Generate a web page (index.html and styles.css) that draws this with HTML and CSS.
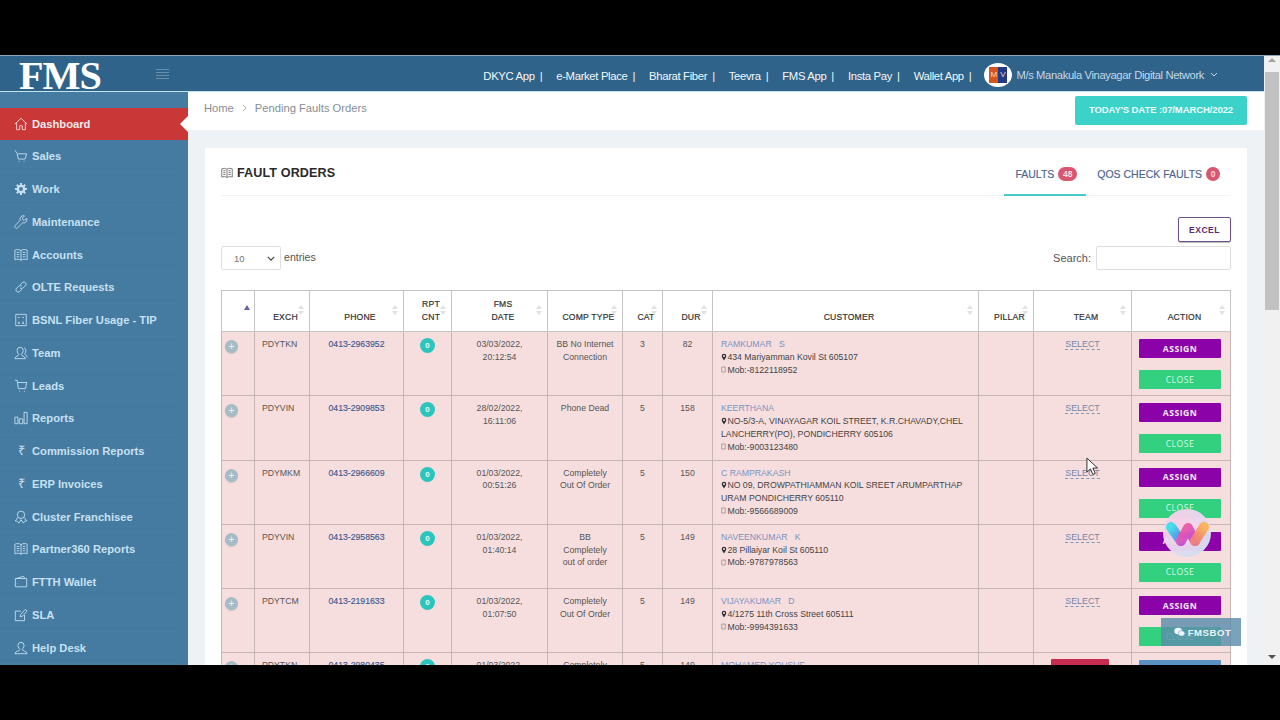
FILE: index.html
```html
<!DOCTYPE html>
<html lang="en">
<head>
<meta charset="utf-8">
<title>Pending Faults Orders</title>
<link rel="stylesheet" href="styles.css">
</head>
<body>
<svg class="defs" aria-hidden="true">
  <symbol id="i-home" viewBox="0 0 16 16"><path d="M1 8 8 1.5 15 8M3 6.5V14.5H6.5V10H9.5V14.5H13V6.5"/></symbol>
  <symbol id="i-basket" viewBox="0 0 16 16"><path d="M1 1.5 4 5.5H14.5L12.5 11.5H5L3.5 5.5M5.5 14h1M11 14h1"/></symbol>
  <symbol id="i-gear" viewBox="0 0 16 16"><circle class="gear-ring" cx="8" cy="8" r="3.6"/><path class="gear-teeth" d="M8 1.2V4M8 12V14.8M1.2 8H4M12 8H14.8M3.2 3.2 5 5M11 11 12.8 12.8M3.2 12.8 5 11M11 5 12.8 3.2"/></symbol>
  <symbol id="i-wrench" viewBox="0 0 16 16"><path d="M14.5 3.5 12 6 10 5.5 9.5 3.5 12 1A4 4 0 0 0 7 6.2L1.5 11.8A1.8 1.8 0 0 0 4.2 14.5L9.8 9A4 4 0 0 0 14.5 3.5Z"/></symbol>
  <symbol id="i-book" viewBox="0 0 16 16"><path d="M1 2.5C3 1.5 6 1.5 8 3 10 1.5 13 1.5 15 2.5V13.5C13 12.5 10 12.5 8 14 6 12.5 3 12.5 1 13.5ZM8 3V14M3 5h3M3 7.5h3M3 10h3M10 5h3M10 7.5h3M10 10h3"/></symbol>
  <symbol id="i-link" viewBox="0 0 16 16"><path d="M7 5.5 10 2.5A2.6 2.6 0 0 1 13.5 6L10.5 9A2.6 2.6 0 0 1 7 9M9 10.5 6 13.5A2.6 2.6 0 0 1 2.5 10L5.5 7A2.6 2.6 0 0 1 9 7"/></symbol>
  <symbol id="i-calc" viewBox="0 0 16 16"><path d="M2 1.5H14V14.5H2ZM4.5 5h2M9.5 5h2M4.5 10.5 6.5 12M6.5 10.5 4.5 12M9.5 10.5h2M9.5 12h2"/></symbol>
  <symbol id="i-team" viewBox="0 0 16 16"><path d="M7 1.5A3.5 3.5 0 0 1 10.5 5C10.5 8 8.5 9 8.5 10 8.5 11.5 13 11.5 13 14.5H1C1 11.5 5.5 11.5 5.5 10 5.5 9 3.5 8 3.5 5A3.5 3.5 0 0 1 7 1.5ZM11.5 2C14 3 14 7 12.5 8.5 12 10 15 10.5 15 13"/></symbol>
  <symbol id="i-cart" viewBox="0 0 16 16"><path d="M1 1.5H3.5L5 11H13L14.5 4H4M6 14h1M11.5 14h1"/></symbol>
  <symbol id="i-bars" viewBox="0 0 16 16"><path d="M1 7H4.5V14.5H1ZM6 9H10V14.5H6ZM11.5 1.5H15V14.5H11.5Z"/></symbol>
  <symbol id="i-award" viewBox="0 0 16 16"><circle cx="8" cy="5.5" r="4.2"/><path d="M4.5 8.5 1.5 12.5 4 13 5.5 15 8 11 10.5 15 12 13 14.5 12.5 11.5 8.5"/></symbol>
  <symbol id="i-wallet" viewBox="0 0 16 16"><path d="M2.5 4 11 1.5 12 4M1.5 4H14.5V13.5H1.5ZM3.5 9.5h.5"/></symbol>
  <symbol id="i-edit" viewBox="0 0 16 16"><path d="M12 8V14.5H1.5V3.5H8M7 10 7.5 7.5 13 1.5 15 3.5 9.5 9.5Z"/></symbol>
  <symbol id="i-user" viewBox="0 0 16 16"><path d="M8 1.5A3.5 3.5 0 0 1 11.5 5C11.5 8 9.5 8.5 9.5 10 9.5 11.5 15 11.5 15 14.5H1C1 11.5 6.5 11.5 6.5 10 6.5 8.5 4.5 8 4.5 5A3.5 3.5 0 0 1 8 1.5Z"/></symbol>
  <symbol id="i-pin" viewBox="0 0 10 12"><path class="solid" d="M5 .5A3.8 3.8 0 0 0 1.2 4.3C1.2 7 5 11.5 5 11.5S8.8 7 8.8 4.3A3.8 3.8 0 0 0 5 .5ZM5 2.6A1.7 1.7 0 1 1 5 6 1.7 1.7 0 0 1 5 2.6Z"/></symbol>
  <symbol id="i-mob" viewBox="0 0 10 12"><path d="M1.5 1H8.5V11H1.5Z"/></symbol>
</svg>
<div class="frame">
  <div class="page">
    <header class="topbar">
      <div class="brand"><span class="logo">FMS</span><span class="burger"><i></i><i></i><i></i><i></i></span></div>
      <nav class="toplinks">
        <a>DKYC App</a><a>e-Market Place</a><a>Bharat Fiber</a><a>Teevra</a><a>FMS App</a><a>Insta Pay</a><a>Wallet App</a>
      </nav>
      <div class="account">
        <span class="avatar"><b class="av-o">M</b><b class="av-b">V</b></span>
        <span class="acname">M/s Manakula Vinayagar Digital Network</span>
        <svg class="chev" viewBox="0 0 8 5"><path d="M1 1 4 4 7 1"/></svg>
      </div>
    </header>
    <div class="shell">
      <aside class="sidebar">
        <a class="item active"><svg class="ic"><use href="#i-home"/></svg>Dashboard</a>
        <a class="item"><svg class="ic"><use href="#i-basket"/></svg>Sales</a>
        <a class="item"><svg class="ic"><use href="#i-gear"/></svg>Work</a>
        <a class="item"><svg class="ic"><use href="#i-wrench"/></svg>Maintenance</a>
        <a class="item"><svg class="ic"><use href="#i-book"/></svg>Accounts</a>
        <a class="item"><svg class="ic"><use href="#i-link"/></svg>OLTE Requests</a>
        <a class="item"><svg class="ic"><use href="#i-calc"/></svg>BSNL Fiber Usage - TIP</a>
        <a class="item"><svg class="ic"><use href="#i-team"/></svg>Team</a>
        <a class="item"><svg class="ic"><use href="#i-cart"/></svg>Leads</a>
        <a class="item"><svg class="ic"><use href="#i-bars"/></svg>Reports</a>
        <a class="item"><span class="ic rupee">₹</span>Commission Reports</a>
        <a class="item"><span class="ic rupee">₹</span>ERP Invoices</a>
        <a class="item"><svg class="ic"><use href="#i-award"/></svg>Cluster Franchisee</a>
        <a class="item"><svg class="ic"><use href="#i-book"/></svg>Partner360 Reports</a>
        <a class="item"><svg class="ic"><use href="#i-wallet"/></svg>FTTH Wallet</a>
        <a class="item"><svg class="ic"><use href="#i-edit"/></svg>SLA</a>
        <a class="item"><svg class="ic"><use href="#i-user"/></svg>Help Desk</a>
      </aside>
      <main class="main">
        <div class="crumbs">
          <div class="trail"><span>Home</span><svg class="sep" viewBox="0 0 6 10"><path d="M1 1 5 5 1 9"/></svg><span>Pending Faults Orders</span></div>
          <div class="today">TODAY'S DATE :07/MARCH/2022</div>
        </div>
        <section class="card">
          <div class="cardhead">
            <h1 class="title"><svg class="ic-title"><use href="#i-book"/></svg>FAULT ORDERS</h1>
            <div class="tabs">
              <a class="tab on">FAULTS <span class="count wide">48</span></a>
              <a class="tab">QOS CHECK FAULTS <span class="count">0</span></a>
            </div>
          </div>
          <div class="tools"><button class="excel">EXCEL</button></div>
          <div class="filters">
            <div class="length"><span class="select">10<svg class="selchev" viewBox="0 0 10 6"><path d="M1 1 5 5 9 1"/></svg></span><span>entries</span></div>
            <div class="search"><label>Search:</label><span class="input"></span></div>
          </div>
          <table class="grid">
            <colgroup>
              <col class="c1"><col class="c2"><col class="c3"><col class="c4"><col class="c5"><col class="c6"><col class="c7"><col class="c8"><col class="c9"><col class="c10"><col class="c11"><col class="c12">
            </colgroup>
            <thead>
              <tr>
                <th class="first"><i class="asc"></i></th>
                <th>EXCH<i class="sort"></i></th>
                <th>PHONE<i class="sort"></i></th>
                <th>RPT<br>CNT<i class="sort"></i></th>
                <th>FMS<br>DATE<i class="sort"></i></th>
                <th>COMP TYPE<i class="sort"></i></th>
                <th>CAT<i class="sort"></i></th>
                <th>DUR<i class="sort"></i></th>
                <th>CUSTOMER<i class="sort"></i></th>
                <th>PILLAR<i class="sort"></i></th>
                <th>TEAM<i class="sort"></i></th>
                <th>ACTION<i class="sort"></i></th>
              </tr>
            </thead>
            <tbody>
              <tr>
                <td><span class="plus">+</span></td><td class="left">PDYTKN</td><td><a class="phone">0413-2963952</a></td><td><span class="zero">0</span></td><td>03/03/2022,<br>20:12:54</td><td>BB No Internet Connection</td><td>3</td><td>82</td>
                <td class="cust"><a class="cname">RAMKUMAR &nbsp; S</a><br><svg class="pin"><use href="#i-pin"/></svg> 434 Mariyamman Kovil St 605107<br><svg class="mob"><use href="#i-mob"/></svg> Mob:-8122118952</td>
                <td></td><td class="team"><a class="sel">SELECT</a></td><td class="act"><button class="assign">ASSIGN</button><button class="close">CLOSE</button></td>
              </tr>
              <tr>
                <td><span class="plus">+</span></td><td class="left">PDYVIN</td><td><a class="phone">0413-2909853</a></td><td><span class="zero">0</span></td><td>28/02/2022,<br>16:11:06</td><td>Phone Dead</td><td>5</td><td>158</td>
                <td class="cust"><a class="cname">KEERTHANA</a><br><svg class="pin"><use href="#i-pin"/></svg> NO-5/3-A, VINAYAGAR KOIL STREET, K.R.CHAVADY,CHEL<br>LANCHERRY(PO), PONDICHERRY 605106<br><svg class="mob"><use href="#i-mob"/></svg> Mob:-9003123480</td>
                <td></td><td class="team"><a class="sel">SELECT</a></td><td class="act"><button class="assign">ASSIGN</button><button class="close">CLOSE</button></td>
              </tr>
              <tr>
                <td><span class="plus">+</span></td><td class="left">PDYMKM</td><td><a class="phone">0413-2966609</a></td><td><span class="zero">0</span></td><td>01/03/2022,<br>00:51:26</td><td>Completely<br>Out Of Order</td><td>5</td><td>150</td>
                <td class="cust"><a class="cname">C RAMPRAKASH</a><br><svg class="pin"><use href="#i-pin"/></svg> NO 09, DROWPATHIAMMAN KOIL SREET ARUMPARTHAP<br>URAM PONDICHERRY 605110<br><svg class="mob"><use href="#i-mob"/></svg> Mob:-9566689009</td>
                <td></td><td class="team"><a class="sel">SELECT</a></td><td class="act"><button class="assign">ASSIGN</button><button class="close">CLOSE</button></td>
              </tr>
              <tr>
                <td><span class="plus">+</span></td><td class="left">PDYVIN</td><td><a class="phone">0413-2958563</a></td><td><span class="zero">0</span></td><td>01/03/2022,<br>01:40:14</td><td>BB<br>Completely<br>out of order</td><td>5</td><td>149</td>
                <td class="cust"><a class="cname">NAVEENKUMAR &nbsp; K</a><br><svg class="pin"><use href="#i-pin"/></svg> 28 Pillaiyar Koil St 605110<br><svg class="mob"><use href="#i-mob"/></svg> Mob:-9787978563</td>
                <td></td><td class="team"><a class="sel">SELECT</a></td><td class="act"><button class="assign">ASSIGN</button><button class="close">CLOSE</button></td>
              </tr>
              <tr>
                <td><span class="plus">+</span></td><td class="left">PDYTCM</td><td><a class="phone">0413-2191633</a></td><td><span class="zero">0</span></td><td>01/03/2022,<br>01:07:50</td><td>Completely<br>Out Of Order</td><td>5</td><td>149</td>
                <td class="cust"><a class="cname">VIJAYAKUMAR &nbsp; D</a><br><svg class="pin"><use href="#i-pin"/></svg> 4/1275 11th Cross Street 605111<br><svg class="mob"><use href="#i-mob"/></svg> Mob:-9994391633</td>
                <td></td><td class="team"><a class="sel">SELECT</a></td><td class="act"><button class="assign">ASSIGN</button><button class="close">CLOSE</button></td>
              </tr>
              <tr>
                <td><span class="plus">+</span></td><td class="left">PDYTKN</td><td><a class="phone">0413-2980435</a></td><td><span class="zero">0</span></td><td>01/03/2022,</td><td>Completely</td><td>5</td><td>149</td>
                <td class="cust"><a class="cname">MOHAMED YOUSUF</a></td>
                <td></td><td class="team"><button class="redbtn"></button></td><td class="act"><button class="bluebtn"></button></td>
              </tr>
            </tbody>
          </table>
        </section>
      </main>
    </div>
  </div>
  <div class="scrollbar">
    <span class="arrow up"></span>
    <span class="thumb"></span>
    <span class="arrow down"></span>
  </div>
  <svg class="cursor" viewBox="0 0 14 20"><path d="M1 1V16L4.8 12.6 7.4 18.6 10 17.4 7.4 11.8 12.4 11.6Z"/></svg>
  <div class="wbadge">
    <svg viewBox="0 0 48 48">
      <defs>
        <linearGradient id="w1" x1="0" y1="0" x2="1" y2="1"><stop offset="0" stop-color="#3fe0e8"/><stop offset="1" stop-color="#6a7df0"/></linearGradient>
        <linearGradient id="w2" x1="0" y1="0" x2="1" y2="1"><stop offset="0" stop-color="#ef5f9d"/><stop offset="1" stop-color="#c050e0"/></linearGradient>
        <linearGradient id="w3" x1="0" y1="1" x2="1" y2="0"><stop offset="0" stop-color="#f28080"/><stop offset="1" stop-color="#fbb45a"/></linearGradient>
      </defs>
      <path class="w-s" stroke="url(#w1)" d="M8 18 18 32"/>
      <path class="w-s" stroke="url(#w2)" d="M18 32 25 19 32 32"/>
      <path class="w-s" stroke="url(#w3)" d="M32 32 41 18"/>
    </svg>
  </div>
  <div class="bot"><svg class="botic" viewBox="0 0 16 14"><ellipse cx="6" cy="5.5" rx="5.6" ry="4.8"/><ellipse class="cut" cx="11" cy="9" rx="4.6" ry="3.9"/></svg>FMSBOT</div>
</div>
</body>
</html>
```
FILE: styles.css
```css
* { box-sizing: border-box; }
html, body { margin: 0; height: 100%; }
body { background: #000; padding: 55px 0; overflow: hidden; font-family: "Liberation Sans", Arial, sans-serif; color: #444; }
.defs { display: none; }
a { text-decoration: none; color: inherit; }

.frame { position: relative; display: flex; height: 610px; overflow: hidden; border-top: 1px solid #8aa5ba; }
.page { flex: 1; min-width: 0; display: flex; flex-direction: column; }

.topbar { flex: 0 0 36px; height: 36px; min-height: 0; display: flex; align-items: center; background: #2f6389; color: #fff; border-bottom: 1px solid #bfe4ee; }
.brand { width: 188px; height: 100%; display: flex; align-items: center; padding-left: 19px; }
.logo { display: block; height: 35px; font: bold 41px/35px "Liberation Serif", serif; color: #fff; letter-spacing: -1px; transform: translateY(2px) scaleX(.98); transform-origin: left center; width: 86px; }
.burger { margin-left: 51px; display: flex; flex-direction: column; gap: 2px; opacity: .45; }
.burger i { display: block; width: 13px; height: 1px; background: #a9c6da; }
.toplinks { margin-left: auto; display: flex; font-size: 11.3px; letter-spacing: -.34px; color: #f2f7fa; padding-top: 5px; }
.toplinks a { margin-right: 14px; }
.toplinks a::after { content: "|"; margin-left: 5px; }
.account { display: flex; align-items: center; margin-right: 46px; padding-top: 2px; }
.avatar { width: 28px; height: 24px; border-radius: 50%; background: #fff; margin-left: -1px; display: flex; align-items: center; justify-content: center; font-size: 8px; color: #f6d5c0; overflow: hidden; }
.avatar b { display: block; height: 16px; line-height: 16px; width: 9px; text-align: center; font-weight: normal; }
.av-o { background: #d4561f; }
.av-b { background: #223a86; }
.acname { margin-left: 4px; font-size: 11.2px; letter-spacing: -.36px; color: #c4d8e6; }
.chev { width: 8px; height: 5px; margin-left: 6px; fill: none; stroke: #c4d8e6; stroke-width: 1; }

.shell { flex: 1; min-height: 0; display: flex; }
.sidebar { flex: 0 0 188px; background: #457aa1; padding-top: 15.7px; overflow: hidden; }
.item { position: relative; display: flex; align-items: center; height: 32.75px; padding-left: 14px; font-size: 11.2px; font-weight: bold; color: #c6e1f3; border-bottom: 1px solid #487da4; margin-right: 12px; }
.item.active { background: #c93737; color: #f8e8e8; margin-right: 0; border-bottom: 0; }
.item.active::after { content: ""; position: absolute; right: 0; top: 50%; margin-top: -8px; border: 8px solid transparent; border-right-color: #fff; border-left-width: 0; }
.ic { width: 14px; height: 14px; margin-right: 4px; flex: none; fill: none; stroke: currentColor; stroke-width: 1; overflow: visible; }
.active .ic { stroke: #fbdede; }
.rupee { font-size: 13px; font-weight: normal; line-height: 14px; text-align: center; }
.gear-ring { stroke-width: 2.8; }
.gear-teeth { stroke-width: 2.2; }

.main { flex: 1; min-width: 0; background: #eef2f5; overflow: hidden; }
.crumbs { height: 38px; background: #fff; padding-left: 16px; padding-right: 17px; display: flex; justify-content: space-between; align-items: flex-start; }
.trail { display: flex; align-items: center; height: 31px; font-size: 11.2px; color: #868e96; }
.sep { width: 5px; height: 8px; margin: 0 8px; fill: none; stroke: #99a; stroke-width: 1; }
.today { margin-top: 4px; width: 172px; height: 29px; line-height: 28px; text-align: center; background: #3ad2c9; color: #eefcfb; font-size: 9.5px; font-weight: bold; letter-spacing: -.1px; border-radius: 2px; }

.card { margin: 18px 17px 0; padding: 0 16px; background: #fff; height: 600px; }
.cardhead { display: flex; justify-content: space-between; height: 48px; border-bottom: 1px solid #f1f2f4; }
.title { margin: 0; padding-top: 18px; font-size: 12.6px; line-height: 15px; font-weight: bold; letter-spacing: .1px; color: #2a2a2a; display: flex; align-items: flex-start; }
.ic-title { width: 12px; height: 12px; margin: 1px 4px 0 0; fill: none; stroke: #555; stroke-width: 1; }
.tabs { display: flex; }
.tab { display: block; height: 48px; padding: 19px 11px 0; font-size: 10.5px; color: #4a6390; -webkit-text-stroke: .15px #4a6390; white-space: nowrap; }
.tab.on { border-bottom: 2px solid #45ccc5; padding-right: 9px; }
.count { display: inline-block; min-width: 14px; height: 14px; line-height: 14px; padding: 0 3px; margin-left: 1px; text-align: center; border-radius: 7px; background: #d95570; color: #f9dfe4; font-size: 8.5px; font-weight: bold; vertical-align: 1px; -webkit-text-stroke: 0; }
.count.wide { min-width: 19px; }
.tools { display: flex; justify-content: flex-end; padding-top: 21px; }
.excel { width: 53px; height: 25px; padding: 0; background: #fff; border: 1px solid #6f4f8a; border-radius: 2px; color: #5b2a78; font: bold 8.5px "Liberation Sans", sans-serif; letter-spacing: .5px; box-shadow: 0 1px 1px #bbb; }
.filters { display: flex; justify-content: space-between; align-items: center; margin-top: 4px; height: 24px; font-size: 11px; color: #555; }
.length { display: flex; align-items: flex-start; height: 24px; }
.length > span:last-child { margin-left: 3px; margin-top: 5px; font-size: 10.6px; }
.select { width: 60px; height: 24px; border: 1px solid #e0e0e4; border-radius: 2px; padding-left: 12px; display: flex; align-items: center; justify-content: space-between; padding-right: 5px; font-size: 9.5px; color: #777; }
.selchev { width: 8px; height: 5px; fill: none; stroke: #444; stroke-width: 1.5; }
.search { display: flex; align-items: center; }
.input { display: block; width: 135px; height: 24px; margin-left: 5px; border: 1px solid #dedde3; border-radius: 2px; }

.grid { width: 1009px; margin-top: 20px; table-layout: fixed; border-collapse: collapse; font-size: 8.7px; color: #555; }
.c1 { width: 33px; } .c2 { width: 55px; } .c3 { width: 94px; } .c4 { width: 48px; } .c5 { width: 96px; } .c6 { width: 75px; } .c7 { width: 40px; } .c8 { width: 50px; } .c9 { width: 266px; } .c10 { width: 55px; } .c11 { width: 98px; } .c12 { width: 99px; }
.grid th { position: relative; height: 41px; vertical-align: bottom; padding: 0 0 7px 7px; border: 1px solid #c8c3c5; background: #fff; font-size: 8.6px; line-height: 13px; font-weight: normal; letter-spacing: .2px; color: #333; -webkit-text-stroke: .2px #333; text-align: center; }
.sort { position: absolute; right: 5px; top: 15px; width: 6px; height: 10px; }
.sort::before, .sort::after { content: ""; position: absolute; left: 0; border: 3px solid transparent; }
.sort::before { top: -4px; border-bottom: 4px solid #e0e2e5; }
.sort::after { top: 5px; border-top: 4px solid #e0e2e5; }
.asc { position: absolute; right: 4px; top: 14px; border: 3px solid transparent; border-bottom: 5px solid #6a5fa8; border-top: 0; }
.grid td { height: 64.25px; vertical-align: top; padding: 6px 6px 0; background: #f6dede; border: 1px solid #c7b6b7; text-align: center; line-height: 12.75px; overflow: hidden; }
.grid td.left { text-align: left; padding-left: 7px; }
.grid td:first-child { padding: 8px 0 0 3px; text-align: left; }
.plus { display: block; width: 13px; height: 13px; line-height: 13px; border-radius: 50%; background: #a5bcc7; color: #e8f2f6; text-align: center; font-size: 10px; box-shadow: 0 1px 1px #c9c0c0; }
.phone { color: #3e5a8e; -webkit-text-stroke: .15px #3e5a8e; }
.zero { display: inline-block; width: 15px; height: 15px; line-height: 15px; border-radius: 50%; background: #2cc5bd; color: #e6fbfa; font-size: 8px; font-weight: bold; margin-top: 0; }
.grid td.cust { text-align: left; padding: 6px 2px 0 8px; white-space: nowrap; color: #444; }
.cname { color: #7b92c0; }
.pin { width: 6px; height: 8px; margin-right: -2px; fill: #333; stroke: none; vertical-align: -1px; }
.mob { width: 5px; height: 7px; margin-right: -1px; fill: none; stroke: #555; stroke-width: .9; vertical-align: -.5px; }
.solid { fill: #333; fill-rule: evenodd; stroke: none; }
.sel { display: inline-block; color: #7485a8; font-size: 8.9px; line-height: 10px; border-bottom: 1px dashed #8496b5; }
.grid td.act { padding: 7px 0 0 7px; text-align: left; }
.act button { display: block; width: 82px; height: 19px; padding: 0; border: 0; border-radius: 1px; font: bold 8.6px "Open Sans", sans-serif; letter-spacing: .5px; color: #f7e6fb; }
.assign { background: #8b02a8; }
.act .close { margin-top: 12px; background: #33d07f; color: #d5f9e4; font-weight: normal; }
.redbtn { display: block; width: 58px; height: 19px; margin: 0 0 0 11px; border: 0; border-radius: 1px; background: #c72c50; }
.act .bluebtn { background: #5b92c4; }

.scrollbar { position: relative; flex: 0 0 16px; display: flex; flex-direction: column; background: #f1f1f1; }
.arrow { flex: 0 0 16px; position: relative; }
.arrow::after { content: ""; position: absolute; left: 4px; border: 4px solid transparent; }
.arrow.up::after { top: 2px; border-bottom: 4px solid #a3a3a3; border-top: 0; }
.arrow.down { margin-top: auto; }
.arrow.down::after { top: 6px; border-top: 4px solid #505050; border-bottom: 0; }
.thumb { display: block; height: 238px; margin: 0 1px; background: #c1c1c1; }

.cursor { position: absolute; left: 1086px; top: 401px; width: 13px; height: 19px; fill: #fff; stroke: #222; stroke-width: 1; }
.wbadge { position: absolute; left: 1163px; top: 453px; width: 48px; height: 48px; border-radius: 50%; background: radial-gradient(circle at 30% 25%, #f9cfe7, #e8d8f0 55%, #bfeaf0); opacity: .97; }
.wbadge svg { display: block; width: 48px; height: 48px; }
.w-s { fill: none; stroke-width: 10; stroke-linecap: round; stroke-linejoin: round; }
.bot { position: absolute; left: 1161px; top: 562px; width: 80px; height: 28px; background: rgba(92, 142, 172, .82); color: #eef5fa; font-size: 9.6px; font-weight: bold; letter-spacing: .5px; display: flex; align-items: center; justify-content: center; padding-left: 3px; }
.botic { width: 11px; height: 10px; margin-right: 3px; fill: #eef5fa; }
.cut { stroke: #6e9bb8; stroke-width: .8; }
```
